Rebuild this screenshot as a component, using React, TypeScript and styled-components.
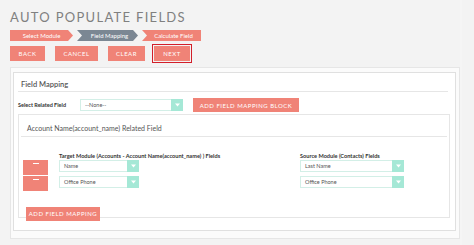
import styled, { createGlobalStyle } from 'styled-components';

const salmon = '#f08377';
const teal = '#a5e8d6';

const GlobalStyle = createGlobalStyle`
  html, body {
    margin: 0;
    padding: 0;
    background: #f3f3f3;
    font-family: Lato, 'Open Sans', sans-serif;
  }
`;

type StepProps = {
  active?: boolean;
  first?: boolean;
  last?: boolean;
};

const Styled = {
  Page: styled.div`
    width: 462px;
    height: 245px;
    padding: 0 0 0 10px;
    box-sizing: border-box;
    background: #f3f3f3;
    border-right: 2px solid #f5f5f5;
    overflow: hidden;
  `,
  Title: styled.h1`
    margin: 9px 0 5px;
    font-size: 13px;
    line-height: 16px;
    font-weight: 400;
    letter-spacing: 1.3px;
    color: #808080;
  `,
  Steps: styled.div`
    display: flex;
    gap: 4px;
    height: 11px;
  `,
  Step: styled.div<StepProps>`
    display: flex;
    align-items: center;
    justify-content: center;
    width: ${({ first, last }) => (first ? 63 : last ? 59 : 61)}px;
    height: 11px;
    padding-left: ${({ first }) => (first ? 0 : 4)}px;
    box-sizing: border-box;
    font-size: 6px;
    color: #fff;
    background: ${({ active }) => (active ? '#7b8793' : salmon)};
    clip-path: ${({ first, last }) =>
      first
        ? 'polygon(0 0, calc(100% - 5px) 0, 100% 50%, calc(100% - 5px) 100%, 0 100%)'
        : last
          ? 'polygon(0 0, 100% 0, 100% 100%, 0 100%, 5px 50%)'
          : 'polygon(0 0, calc(100% - 5px) 0, 100% 50%, calc(100% - 5px) 100%, 0 100%, 5px 50%)'};
  `,
  Toolbar: styled.div`
    display: flex;
    gap: 10px;
    margin-top: 5px;
    height: 15px;
  `,
  Button: styled.button<{ w: number; focused?: boolean }>`
    width: ${({ w }) => w}px;
    height: 15px;
    padding: 0;
    border: none;
    background: ${salmon};
    color: #fff;
    font-family: Lato, sans-serif;
    font-size: 6px;
    letter-spacing: 0.5px;
    text-transform: uppercase;
    outline: ${({ focused }) => (focused ? '1.5px solid #d21f2a' : 'none')};
    outline-offset: 1px;
  `,
  Outer: styled.div`
    width: 450px;
    margin-top: 6px;
    padding: 4px 3px 7px 2px;
    box-sizing: border-box;
    background: #fbfbfb;
    border: 1px solid #e6e6e6;
  `,
  Inner: styled.div`
    background: #fff;
    border: 1px solid #e0e0e0;
    padding: 5px 4px 12px 4px;
  `,
  PanelHead: styled.div`
    height: 13px;
    padding-left: 3px;
    margin-right: 3px;
    border-bottom: 1px solid #e6e6e6;
    font-size: 7.5px;
    line-height: 13px;
    font-weight: 600;
    color: #555;
  `,
  RelatedRow: styled.div`
    display: flex;
    align-items: center;
    height: 14px;
    margin-top: 6px;
  `,
  Label: styled.span`
    width: 62px;
    font-size: 5.5px;
    font-weight: 700;
    color: #333;
  `,
  Select: styled.div<{ w: number }>`
    display: flex;
    width: ${({ w }) => w}px;
    height: 12px;
    box-sizing: border-box;
    border: 1px solid #d3efe7;
    background: #fff;
  `,
  SelectText: styled.span`
    flex: 1;
    padding-left: 4px;
    font-size: 5.5px;
    line-height: 10px;
    color: #555;
  `,
  Arrow: styled.span`
    display: flex;
    align-items: center;
    justify-content: center;
    width: 12px;
    background: ${teal};
    margin: -1px -1px -1px 0;
  `,
  Block: styled.div`
    margin-top: 2px;
    margin-right: 1px;
    border: 1px solid #e6e6e6;
    padding: 0 2px 6px;
    height: 104px;
    box-sizing: border-box;
  `,
  BlockHead: styled.div`
    height: 21px;
    padding: 0 0 0 6px;
    border-bottom: 1px solid #e6e6e6;
    font-size: 7px;
    line-height: 27px;
    color: #555;
  `,
  Grid: styled.div`
    display: grid;
    grid-template-columns: 25px 230px 104px;
    grid-template-rows: 8px 16px 16px;
    column-gap: 11px;
    margin: 15px 0 0 2px;
    align-items: start;
  `,
  ColLabel: styled.span`
    font-size: 5.6px;
    line-height: 8px;
    font-weight: 700;
    color: #333;
    white-space: nowrap;
  `,
  Minus: styled.button`
    display: flex;
    justify-content: center;
    width: 25px;
    height: 15px;
    padding: 3px 0 0;
    border: none;
    background: ${salmon};
    &::before {
      content: '';
      width: 6px;
      height: 1px;
      background: #fff;
    }
  `,
  Footer: styled.div`
    margin: 8px 0 0 5px;
  `,
};

const Caret = () => (
  <svg width="5" height="4" viewBox="0 0 5 4">
    <path d="M0 0.5h5L2.5 3.5z" fill="#fff" />
  </svg>
);

const Dropdown = ({ w, value }: { w: number; value: string }) => (
  <Styled.Select w={w}>
    <Styled.SelectText>{value}</Styled.SelectText>
    <Styled.Arrow>
      <Caret />
    </Styled.Arrow>
  </Styled.Select>
);

const App = () => (
  <>
    <GlobalStyle />
    <Styled.Page>
      <Styled.Title>AUTO POPULATE FIELDS</Styled.Title>
      <Styled.Steps>
        <Styled.Step first>Select Module</Styled.Step>
        <Styled.Step active>Field Mapping</Styled.Step>
        <Styled.Step last>Calculate Field</Styled.Step>
      </Styled.Steps>
      <Styled.Toolbar>
        <Styled.Button w={35}>Back</Styled.Button>
        <Styled.Button w={43}>Cancel</Styled.Button>
        <Styled.Button w={37}>Clear</Styled.Button>
        <Styled.Button w={36} focused style={{ marginLeft: -1 }}>
          Next
        </Styled.Button>
      </Styled.Toolbar>
      <Styled.Outer>
        <Styled.Inner>
          <Styled.PanelHead>Field Mapping</Styled.PanelHead>
          <Styled.RelatedRow>
            <Styled.Label>Select Related Field</Styled.Label>
            <Dropdown w={103} value="--None--" />
            <Styled.Button w={106} style={{ marginLeft: 10, height: 14 }}>
              Add field mapping block
            </Styled.Button>
          </Styled.RelatedRow>
          <Styled.Block>
            <Styled.BlockHead>Account Name(account_name) Related Field</Styled.BlockHead>
            <Styled.Grid>
              <span />
              <Styled.ColLabel>Target Module (Accounts - Account Name(account_name) ) Fields</Styled.ColLabel>
              <Styled.ColLabel>Source Module (Contacts) Fields</Styled.ColLabel>
              <Styled.Minus />
              <Dropdown w={80} value="Name" />
              <Dropdown w={104} value="Last Name" />
              <Styled.Minus />
              <Dropdown w={80} value="Office Phone" />
              <Dropdown w={104} value="Office Phone" />
            </Styled.Grid>
            <Styled.Footer>
              <Styled.Button w={74} style={{ height: 14 }}>
                Add field mapping
              </Styled.Button>
            </Styled.Footer>
          </Styled.Block>
        </Styled.Inner>
      </Styled.Outer>
    </Styled.Page>
  </>
);

export default App;
